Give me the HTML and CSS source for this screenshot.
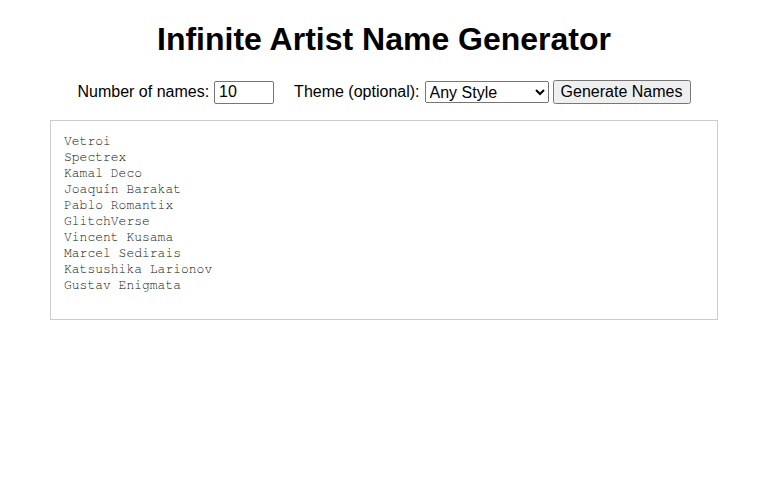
FILE: index.html
```html
<!DOCTYPE html>
<html>
<head>
<meta charset="utf-8">
<title>Infinite Artist Name Generator</title>
<link rel="stylesheet" href="styles.css">
</head>
<body>
<h1 class="title">Infinite Artist Name Generator</h1>
<div class="controls">
  <label class="field">Number of names: <input class="num" type="number" value="10"></label>
  <label class="field theme">Theme (optional): <select class="sel"><option>Any Style</option></select></label>
  <button class="btn">Generate Names</button>
</div>
<pre class="output">Vetroi
Spectrex
Kamal Deco
Joaquín Barakat
Pablo Romantix
GlitchVerse
Vincent Kusama
Marcel Sedirais
Katsushika Larionov
Gustav Enigmata</pre>
</body>
</html>
```
FILE: styles.css
```css
html, body {
  margin: 0;
  background: #fff;
}
body {
  padding: 21px 50px 20px;
  font-family: "Liberation Sans", Arial, sans-serif;
  color: #000;
}
.title {
  margin: 0 0 22px;
  font-size: 32px;
  line-height: 37px;
  text-align: center;
  font-weight: bold;
}
.controls {
  display: flex;
  justify-content: center;
  align-items: center;
  font-size: 16px;
  height: 24px;
  margin-bottom: 16px;
}
.field {
  display: flex;
  align-items: center;
  gap: 5px;
}
.theme {
  margin-left: 20px;
}
.num {
  width: 60px;
  height: 23px;
  box-sizing: border-box;
  font: 16px "Liberation Sans", Arial, sans-serif;
  padding: 1px 4px;
  border: 1px solid #767676;
  border-radius: 2px;
  -moz-appearance: textfield;
}
.num::-webkit-inner-spin-button,
.num::-webkit-outer-spin-button {
  -webkit-appearance: none;
  margin: 0;
}
.sel {
  width: 124px;
  height: 22px;
  font: 16px "Liberation Sans", Arial, sans-serif;
}
.btn {
  margin-left: 4px;
  height: 24px;
  width: 138px;
  font: 16px "Liberation Sans", Arial, sans-serif;
}
.output {
  margin: 0;
  box-sizing: border-box;
  height: 200px;
  border: 1px solid #ccc;
  padding: 13px 13px;
  font-family: "Nimbus Mono PS", "FreeMono", "Liberation Mono", "Courier New", monospace;
  font-size: 13px;
  line-height: 16px;
  color: #111;
}
```
